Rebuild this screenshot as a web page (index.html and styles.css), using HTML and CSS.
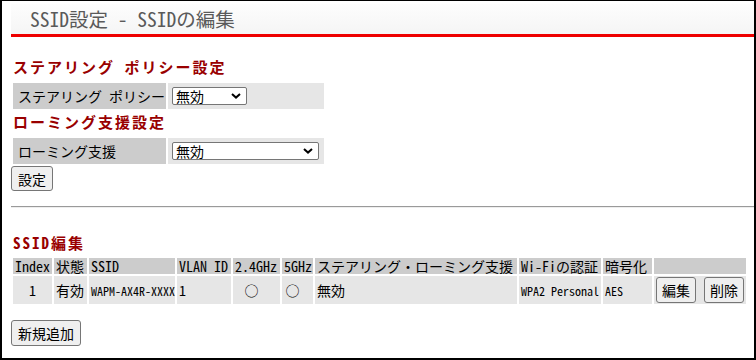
FILE: index.html
```html
<!DOCTYPE html>
<html lang="ja">
<head>
    <meta charset="UTF-8">
    <meta name="viewport" content="width=device-width, initial-scale=1.0">
    <title>SSID設定 - SSIDの編集</title>
    <link rel="stylesheet" href="styles.css">
</head>
<body>
    <div class="frame">
        <div class="title-bar">SSID設定 - SSIDの編集</div>

        <h2 class="section-title first">ステアリング ポリシー設定</h2>
        <table class="setting-table">
            <tr>
                <td class="label">ステアリング ポリシー</td>
                <td class="value">
                    <select class="select-short">
                        <option>無効</option>
                        <option>有効</option>
                    </select>
                </td>
            </tr>
        </table>

        <h2 class="section-title">ローミング支援設定</h2>
        <table class="setting-table">
            <tr>
                <td class="label">ローミング支援</td>
                <td class="value">
                    <select class="select-long">
                        <option>無効</option>
                        <option>有効</option>
                    </select>
                </td>
            </tr>
        </table>
        <div class="actions">
            <button type="button" class="btn">設定</button>
        </div>

        <hr class="divider">

        <h2 class="section-title ssid-title">SSID編集</h2>
        <table class="ssid-table">
            <tr class="head">
                <td class="c-index">Index</td>
                <td class="c-state">状態</td>
                <td class="c-ssid">SSID</td>
                <td class="c-vlan">VLAN ID</td>
                <td class="c-24">2.4GHz</td>
                <td class="c-5">5GHz</td>
                <td class="c-steer">ステアリング・ローミング支援</td>
                <td class="c-auth">Wi-Fiの認証</td>
                <td class="c-enc">暗号化</td>
                <td class="c-ops"></td>
            </tr>
            <tr class="row">
                <td class="center">1</td>
                <td>有効</td>
                <td class="small">WAPM-AX4R-XXXX</td>
                <td>1</td>
                <td class="mark">○</td>
                <td class="mark">○</td>
                <td>無効</td>
                <td class="small">WPA2 Personal</td>
                <td class="small">AES</td>
                <td>
                    <div class="ops">
                        <button type="button" class="btn">編集</button>
                        <button type="button" class="btn">削除</button>
                    </div>
                </td>
            </tr>
        </table>
        <div class="actions add">
            <button type="button" class="btn">新規追加</button>
        </div>
    </div>
</body>
</html>
```

FILE: styles.css
```css
body {
    margin: 0;
    font-family: "Noto Sans Mono CJK JP", "Noto Sans CJK JP", monospace;
    font-size: 14px;
    color: #000;
    background: #fff;
}
.frame {
    box-sizing: border-box;
    height: 360px;
    border: 2px solid #000;
    border-top-width: 1px;
    padding: 3px 0 0 9px;
    overflow: hidden;
}
.title-bar {
    height: 30px;
    line-height: 30px;
    padding-left: 19px;
    background: linear-gradient(#fdfdfd, #f5f5f5);
    border-bottom: 3px solid #ee0000;
    color: #5a5a5a;
    font-size: 19.5px;
}
.section-title {
    margin: 0 0 3px;
    padding-left: 2px;
    line-height: 22px;
    color: #990000;
    font-size: 15px;
    font-weight: bold;
    letter-spacing: 2px;
}
.section-title.first {
    margin-top: 19px;
}
.setting-table {
    table-layout: fixed;
    width: 315px;
    border-spacing: 2px;
}
.setting-table td {
    box-sizing: border-box;
    height: 26px;
    padding: 0 4px;
    vertical-align: middle;
}
.setting-table .label {
    width: 153px;
    padding-left: 5px;
    background: #ccc;
    white-space: nowrap;
}
.setting-table .value {
    background: #e6e6e6;
}
.setting-table select {
    display: block;
    box-sizing: border-box;
    height: 18px;
    padding: 0 0 0 3px;
    font-family: inherit;
    font-size: 14px;
    line-height: 16px;
    color: #000;
    border: 1px solid #767676;
    border-radius: 2px;
    -webkit-appearance: none;
    appearance: none;
    background: #fff url("data:image/svg+xml,%3Csvg xmlns='http://www.w3.org/2000/svg' width='10' height='6' viewBox='0 0 10 6'%3E%3Cpath d='M1 1l4 3.6L9 1' fill='none' stroke='%23000' stroke-width='2'/%3E%3C/svg%3E") no-repeat right 5px center;
}
.select-short {
    width: 75px;
}
.select-long {
    width: 147px;
}
.btn {
    box-sizing: border-box;
    height: 25px;
    padding: 0 6px;
    font-family: inherit;
    font-size: 14px;
    color: #000;
    background: #efefef;
    border: 1px solid #767676;
    border-radius: 3px;
}
.actions .btn {
    display: block;
}
.divider {
    margin: 15px 0 0;
    border: 0;
    border-top: 1px solid #9a9a9a;
    border-bottom: 1px solid #eee;
}
.ssid-title {
    margin-top: 24px;
    margin-bottom: 2px;
}
.ssid-table {
    table-layout: fixed;
    width: 737px;
    border-spacing: 2px;
}
.ssid-table td {
    box-sizing: border-box;
    padding: 0 2px;
    white-space: nowrap;
    vertical-align: middle;
}
.ssid-table .head td {
    height: 16px;
    line-height: 16px;
    background: #ccc;
}
.ssid-table .row td {
    height: 28px;
    background: #e6e6e6;
}
.c-index { width: 39px; }
.c-state { width: 33px; }
.c-ssid { width: 86px; }
.c-vlan { width: 54px; }
.c-24 { width: 47px; }
.c-5 { width: 31px; }
.c-steer { width: 202px; }
.c-auth { width: 82px; }
.c-enc { width: 49px; }
.c-ops { width: 92px; }
.ssid-table .center {
    text-align: center;
}
.ssid-table .mark {
    text-align: center;
    padding-right: 12px;
}
.ssid-table .small {
    font-size: 12px;
}
.ops {
    display: flex;
    gap: 8px;
}
.ops .btn {
    height: 26px;
    width: 42px;
    padding: 0;
}
.actions.add {
    margin-top: 14px;
}
.actions.add .btn {
    height: 26px;
}
```
